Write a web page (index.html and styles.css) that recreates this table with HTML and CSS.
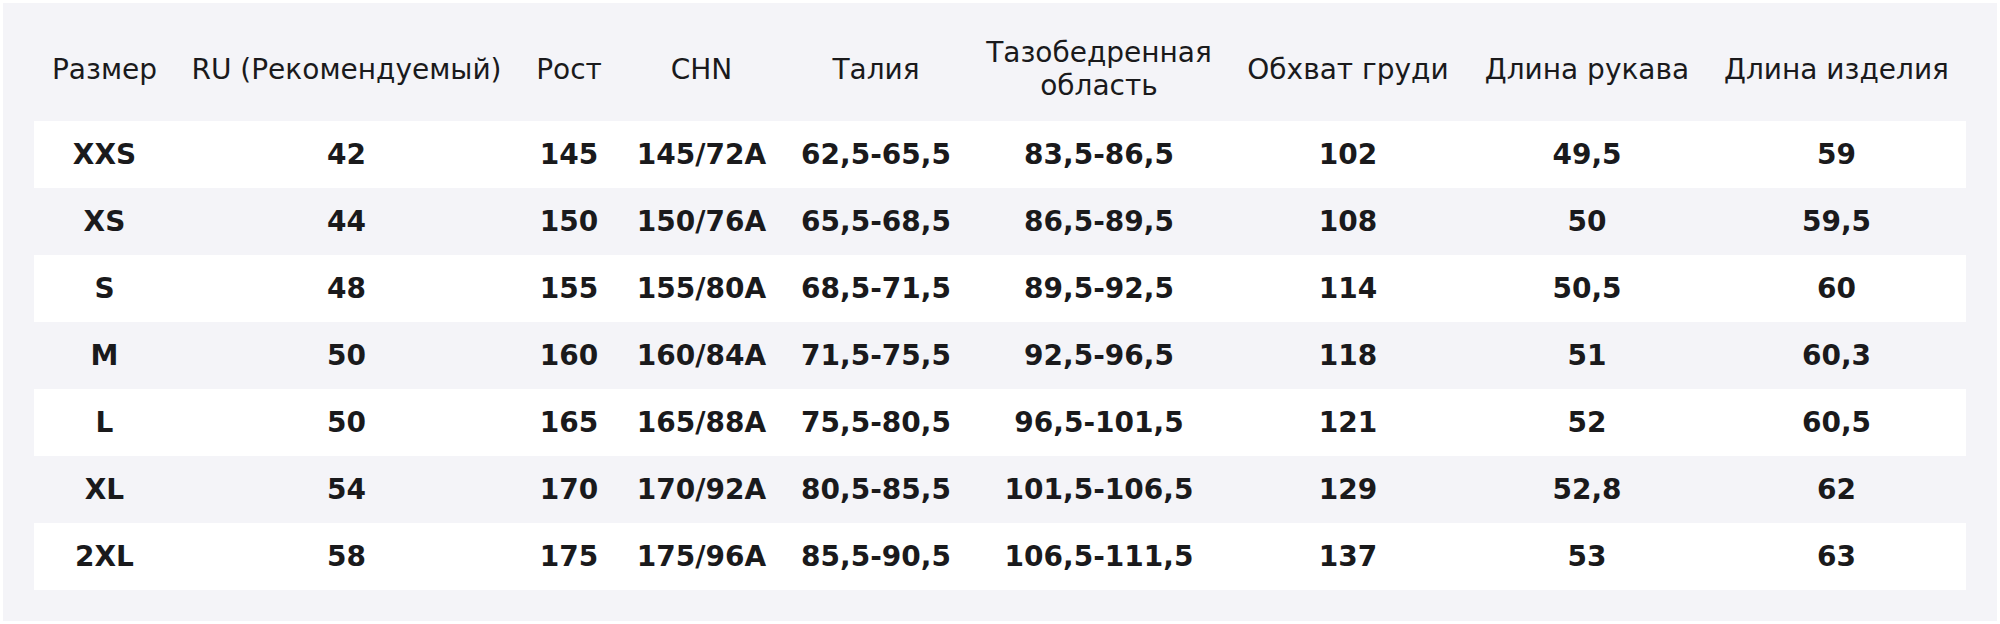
FILE: index.html
```html
<!DOCTYPE html>
<html lang="ru">
<head>
<meta charset="utf-8">
<title>Таблица размеров</title>
<link rel="stylesheet" href="styles.css">
</head>
<body>
<div class="panel">
  <table class="sizes">
    <colgroup>
      <col class="c-size">
      <col class="c-ru">
      <col class="c-height">
      <col class="c-chn">
      <col class="c-waist">
      <col class="c-hip">
      <col class="c-chest">
      <col class="c-sleeve">
      <col class="c-length">
    </colgroup>
    <thead>
      <tr>
        <th>Размер</th>
        <th>RU (Рекомендуемый)</th>
        <th>Рост</th>
        <th>CHN</th>
        <th>Талия</th>
        <th>Тазобедренная<br>область</th>
        <th>Обхват груди</th>
        <th>Длина рукава</th>
        <th>Длина изделия</th>
      </tr>
    </thead>
    <tbody>
      <tr><td>XXS</td><td>42</td><td>145</td><td>145/72A</td><td>62,5-65,5</td><td>83,5-86,5</td><td>102</td><td>49,5</td><td>59</td></tr>
      <tr><td>XS</td><td>44</td><td>150</td><td>150/76A</td><td>65,5-68,5</td><td>86,5-89,5</td><td>108</td><td>50</td><td>59,5</td></tr>
      <tr><td>S</td><td>48</td><td>155</td><td>155/80A</td><td>68,5-71,5</td><td>89,5-92,5</td><td>114</td><td>50,5</td><td>60</td></tr>
      <tr><td>M</td><td>50</td><td>160</td><td>160/84A</td><td>71,5-75,5</td><td>92,5-96,5</td><td>118</td><td>51</td><td>60,3</td></tr>
      <tr><td>L</td><td>50</td><td>165</td><td>165/88A</td><td>75,5-80,5</td><td>96,5-101,5</td><td>121</td><td>52</td><td>60,5</td></tr>
      <tr><td>XL</td><td>54</td><td>170</td><td>170/92A</td><td>80,5-85,5</td><td>101,5-106,5</td><td>129</td><td>52,8</td><td>62</td></tr>
      <tr><td>2XL</td><td>58</td><td>175</td><td>175/96A</td><td>85,5-90,5</td><td>106,5-111,5</td><td>137</td><td>53</td><td>63</td></tr>
    </tbody>
  </table>
</div>
</body>
</html>
```

FILE: styles.css
```css
html, body {
  margin: 0;
  padding: 0;
  background: #ffffff;
}

body {
  padding: 3px;
  font-family: "DejaVu Sans", "Liberation Sans", sans-serif;
  color: #1a1a1c;
}

.panel {
  background: #f4f4f8;
  height: 618px;
  box-sizing: border-box;
  padding: 14px 31px 31px 31px;
}

.sizes {
  width: 1932px;
  table-layout: fixed;
  border-collapse: collapse;
  border-spacing: 0;
}

.c-size { width: 141px; }
.c-ru { width: 343px; }
.c-height { width: 102px; }
.c-chn { width: 163px; }
.c-waist { width: 186px; }
.c-hip { width: 260px; }
.c-chest { width: 238px; }
.c-sleeve { width: 240px; }
.c-length { width: 259px; }

.sizes th,
.sizes td {
  padding: 0;
  text-align: center;
  vertical-align: middle;
  white-space: nowrap;
  font-size: 28px;
  line-height: 33px;
}

.sizes th {
  font-weight: normal;
  height: 104px;
}

.sizes td {
  font-weight: bold;
  height: 67px;
}

.sizes tbody tr:nth-child(odd) {
  background: #ffffff;
}

.sizes tbody tr:nth-child(even) {
  background: transparent;
}
```
